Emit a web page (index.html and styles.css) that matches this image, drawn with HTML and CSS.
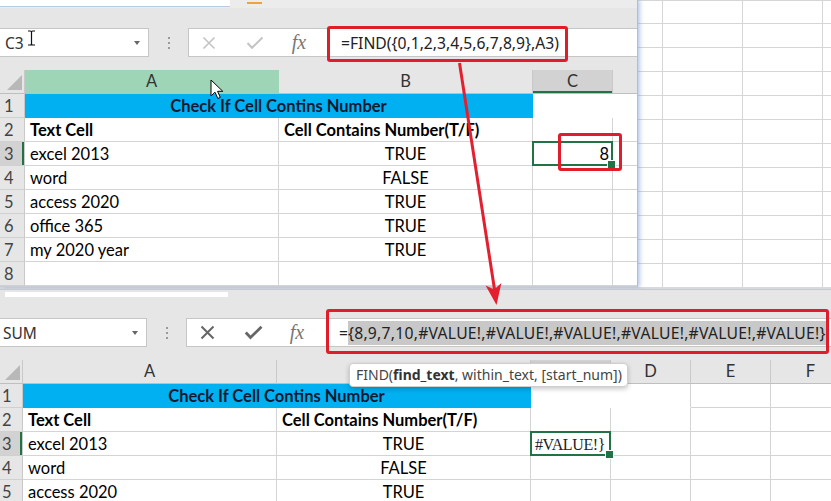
FILE: index.html
```html
<!DOCTYPE html>
<html>
<head>
<meta charset="utf-8">
<title>Excel FIND</title>
<link rel="stylesheet" href="styles.css">
</head>
<body>
<div class="stage">
  <div class="backsheet"></div>

  <div class="win win-top">
    <div class="strip"><div class="tab"></div><div class="mark"></div></div>
    <div class="fbar">
      <div class="namebox"><span class="name">C3</span><span class="caret"></span></div>
      <div class="dots"><i></i><i></i><i></i></div>
      <div class="fbox">
        <span class="ico i1"><svg width="14" height="14" viewBox="0 0 14 14"><path d="M1.5 1.5L12.5 12.5M12.5 1.5L1.5 12.5" stroke="currentColor" stroke-width="1.6" fill="none"/></svg></span>
        <span class="ico i2"><svg width="18" height="14" viewBox="0 0 18 14"><path d="M1.5 7L6 11.8L16.5 1.5" stroke="currentColor" stroke-width="2" fill="none"/></svg></span>
        <span class="ico i3 fx">fx</span>
        <span class="formula">=FIND({0,1,2,3,4,5,6,7,8,9},A3)</span>
      </div>
    </div>
    <div class="sheet s5">
      <div class="corner"><div class="tri"></div></div>
      <div class="ch hl">A</div><div class="ch">B</div><div class="ch act">C</div><div class="ch"></div>

      <div class="rh">1</div><div class="c t">Check If Cell Contins Number</div><div class="c o"></div><div class="c o"></div>
      <div class="rh">2</div><div class="c b">Text Cell</div><div class="c b">Cell Contains Number(T/F)</div><div class="c"></div><div class="c"></div>
      <div class="rh act">3</div><div class="c">excel 2013</div><div class="c m">TRUE</div><div class="c r sel">8</div><div class="c"></div>
      <div class="rh">4</div><div class="c">word</div><div class="c m">FALSE</div><div class="c"></div><div class="c"></div>
      <div class="rh">5</div><div class="c">access 2020</div><div class="c m">TRUE</div><div class="c"></div><div class="c"></div>
      <div class="rh">6</div><div class="c">office 365</div><div class="c m">TRUE</div><div class="c"></div><div class="c"></div>
      <div class="rh">7</div><div class="c">my 2020 year</div><div class="c m">TRUE</div><div class="c"></div><div class="c"></div>
      <div class="rh">8</div><div class="c"></div><div class="c"></div><div class="c"></div><div class="c"></div>
    </div>
  </div>

  <div class="win win-bottom">
    <div class="strip"><div class="tab"></div></div>
    <div class="fbar">
      <div class="namebox"><span class="name">SUM</span><span class="caret"></span></div>
      <div class="dots"><i></i><i></i><i></i></div>
      <div class="fbox">
        <span class="ico i1 on"><svg width="15" height="15" viewBox="0 0 15 15"><path d="M1.5 1.5L13.5 13.5M13.5 1.5L1.5 13.5" stroke="currentColor" stroke-width="2" fill="none"/></svg></span>
        <span class="ico i2 on"><svg width="19" height="15" viewBox="0 0 19 15"><path d="M1.8 7.5L6.5 12.5L17.5 1.8" stroke="currentColor" stroke-width="2.8" fill="none"/></svg></span>
        <span class="ico i3 fx">fx</span>
        <span class="formula">=<span class="hlt">{8,9,7,10,#VALUE!,#VALUE!,#VALUE!,#VALUE!,#VALUE!,#VALUE!}</span></span>
      </div>
    </div>
    <div class="sheet s7">
      <div class="corner"><div class="tri"></div></div>
      <div class="ch">A</div><div class="ch"></div><div class="ch act"></div><div class="ch">D</div><div class="ch">E</div><div class="ch">F</div>

      <div class="rh">1</div><div class="c t">Check If Cell Contins Number</div><div class="c o"></div><div class="c ob"></div><div class="c"></div><div class="c"></div>
      <div class="rh">2</div><div class="c b">Text Cell</div><div class="c b">Cell Contains Number(T/F)</div><div class="c"></div><div class="c"></div><div class="c"></div><div class="c"></div>
      <div class="rh act">3</div><div class="c">excel 2013</div><div class="c m">TRUE</div><div class="c sel sv">#VALUE!}</div><div class="c"></div><div class="c"></div><div class="c"></div>
      <div class="rh">4</div><div class="c">word</div><div class="c m">FALSE</div><div class="c"></div><div class="c"></div><div class="c"></div><div class="c"></div>
      <div class="rh">5</div><div class="c">access 2020</div><div class="c m">TRUE</div><div class="c"></div><div class="c"></div><div class="c"></div><div class="c"></div>
    </div>
    <div class="tip">FIND(<b>find_text</b>, within_text, [start_num])</div>
  </div>

  <div class="redbox rb1"></div>
  <div class="redbox rb2"></div>
  <div class="redbox rb3"></div>

  <svg class="ibeam" width="9" height="16" viewBox="0 0 9 16"><path d="M1 1H3.3Q4.5 1 4.5 2.3V13.7Q4.5 15 3.3 15H1M8 1H5.7Q4.5 1 4.5 2.3M4.5 13.7Q4.5 15 5.7 15H8" stroke="#111" stroke-width="1.2" fill="none"/></svg>
  <svg class="mouse" width="14" height="21" viewBox="0 0 14 21"><path d="M1 1V17L5 13.2L7.8 19.5L10.3 18.4L7.6 12.3H12.8Z" fill="#fff" stroke="#000" stroke-width="1" stroke-linejoin="round"/></svg>

  <svg class="arrow" width="831" height="501" viewBox="0 0 831 501">
    <line x1="459.5" y1="63" x2="494.6" y2="290" stroke="#e3202f" stroke-width="3"/>
    <polygon points="496.5,305 485.6,285.4 494.3,289.5 501.4,283" fill="#e3202f"/>
  </svg>
</div>
</body>
</html>
```

FILE: styles.css
```css
* { box-sizing: border-box; margin: 0; padding: 0; }
html, body { width: 831px; height: 501px; overflow: hidden; }
body { background: #e6e6e6; font-family: Lato, "Liberation Sans", sans-serif; color: #000; }

.stage { position: relative; width: 831px; height: 501px; overflow: hidden; }

/* spreadsheet visible behind the top window */
.backsheet {
  position: absolute; left: 0; top: 0; width: 831px; height: 290px;
  background-color: #fff;
  background-image:
    repeating-linear-gradient(to right, #d6d6d6 0 1px, transparent 1px 80px),
    repeating-linear-gradient(to bottom, #d6d6d6 0 1px, transparent 1px 24px);
  background-position: 22px 0, 0 23px;
  border-bottom: 3px solid #d9d9d9;
}

.win { position: absolute; background: #e6e6e6; overflow: hidden; }
.win-top {
  left: 0; top: 0; width: 637px; height: 287px; z-index: 1;
  border-bottom: 1px solid #c5cdd8;
  box-shadow: 1px 0 0 #a8c0e0, 3px 0 4px rgba(110, 150, 215, .5);
}
.win-bottom {
  left: -2px; top: 289px; width: 833px; height: 212px; z-index: 2;
  border-top: 1px solid #c3cad4;
}

/* ribbon remnant */
.strip { height: 8px; display: flex; align-items: flex-start; background: #ececec; }
.strip .tab { width: 230px; height: 7px; background: #fff; border-bottom: 1px solid #b8cbe6; }
.strip .mark { width: 15px; height: 2px; margin: 2px 0 0 17px; background: #eaa53c; }
.win-bottom .strip { background: #e6e6e6; }
.win-bottom .strip .tab { width: 223px; height: 5px; margin: 2px 0 0 7px; border-bottom: 0; }

/* formula bar */
.fbar { height: 62px; padding: 20px 0 13px; display: flex; }
.namebox {
  width: 149px; height: 29px; background: #fff;
  border: 1px solid #c6c6c6; border-left: 0;
  display: flex; align-items: center; justify-content: space-between;
  padding: 0 8px 0 5px;
  font-family: "Noto Sans", sans-serif; font-size: 15.5px; color: #333;
}
.caret { width: 0; height: 0; border-left: 3.5px solid transparent; border-right: 3.5px solid transparent; border-top: 4px solid #666; }
.dots { width: 39px; display: flex; flex-direction: column; align-items: center; justify-content: center; gap: 3px; }
.dots i { display: block; width: 2px; height: 2px; background: #9a9a9a; }
.fbox {
  flex: 1; height: 29px; background: #fff;
  border: 1px solid #c6c6c6; border-right: 0;
  display: flex; align-items: center;
  font-family: "Noto Sans", sans-serif; font-size: 15.7px; color: #222; white-space: nowrap;
}
.ico { display: flex; justify-content: center; align-items: center; color: #c4c4c4; height: 27px; }
.ico.on { color: #666; }
.i1 { width: 40px; }
.i2 { width: 52px; }
.i3 { width: 36px; }
.fx { font-family: "Liberation Serif", serif; font-style: italic; font-size: 20px; color: #777; }
.formula { margin-left: 24px; }
.hlt { display: inline-block; background: #c8c8c8; line-height: 24px; letter-spacing: 0.25px; }

/* grid */
.sheet { display: grid; grid-auto-rows: 24px; background: #fff; }
.s5 { grid-template-columns: 25px 254px 254px 80px 80px; }
.s7 { grid-template-columns: 25px 254px 254px 80px 80px 80px 80px; }

.corner {
  background: #e6e6e6; border-right: 1px solid #c9c9c9; border-bottom: 1px solid #bfbfbf;
  display: flex; justify-content: flex-end; align-items: flex-end; padding: 0 2px 3px 0;
}
.tri { width: 15px; height: 15px; background: #b8b8b8; clip-path: polygon(100% 0, 100% 100%, 0 100%); }

.ch {
  background: #e6e6e6; border-right: 1px solid #c9c9c9; border-bottom: 1px solid #bfbfbf;
  text-align: center; font-size: 16.5px; line-height: 23px; color: #333;
}
.ch.hl { background: #9fd5b7; border-right-color: #9fd5b7; }
.ch.act { background: #d2d2d2; box-shadow: inset 0 -2px 0 #217346; }

.rh {
  background: #e6e6e6; border-right: 1px solid #c9c9c9; border-bottom: 1px solid #d0d0d0;
  font-size: 16.5px; line-height: 21px; padding: 2px 0 0 4px; color: #444;
}
.rh.act { background: #d2d2d2; box-shadow: inset -2px 0 0 #217346; }

.c {
  background: #fff; border-right: 1px solid #d4d4d4; border-bottom: 1px solid #d4d4d4;
  font-size: 16.5px; line-height: 21px; padding: 2px 5px 0;
  white-space: nowrap; overflow: hidden;
}
.c.t { grid-column: span 2; background: #00b0f0; border-color: #00b0f0; font-weight: 700; text-align: center; color: #0c1830; }
.c.b { font-weight: 700; }
.c.m { text-align: center; }
.c.r { text-align: right; padding-right: 3px; }
.c.o { border-right-color: #fff; border-bottom-color: #fff; }
.c.ob { border-bottom-color: #fff; }
.c.sv { font-family: "Liberation Serif", serif; font-size: 16px; letter-spacing: -0.4px; padding-left: 4px; color: #222; }
.c.sel { position: relative; overflow: visible; }
.c.sel::after {
  content: ""; position: absolute; left: -1px; top: -1px; right: -1px; bottom: -1px;
  border: 2px solid #217346; z-index: 3;
}
.c.sel::before {
  content: ""; position: absolute; right: -4px; bottom: -4px; width: 7px; height: 7px;
  background: #217346; border: 1px solid #fff; z-index: 4;
}

/* tooltip */
.tip {
  position: absolute; left: 351px; top: 73px; width: 279px; height: 24px; z-index: 5;
  background: #fff; border: 1px solid #cfcfcf; border-radius: 4px;
  box-shadow: 0 2px 5px rgba(0, 0, 0, .22);
  font-family: "Noto Sans", sans-serif; font-size: 14px; line-height: 22px;
  padding-left: 6px; color: #444; white-space: nowrap;
}
.tip b { color: #333; }

/* annotations */
.redbox { position: absolute; border: 3px solid #e11d2b; border-radius: 3px; z-index: 5; }
.rb1 { left: 327px; top: 26px; width: 241px; height: 36px; }
.rb2 { left: 558px; top: 133px; width: 64px; height: 38px; }
.rb3 { left: 326px; top: 309px; width: 503px; height: 45px; }

.ibeam { position: absolute; left: 27px; top: 30px; z-index: 6; }
.mouse { position: absolute; left: 210px; top: 79px; z-index: 6; }
.arrow { position: absolute; left: 0; top: 0; z-index: 7; pointer-events: none; }
```
